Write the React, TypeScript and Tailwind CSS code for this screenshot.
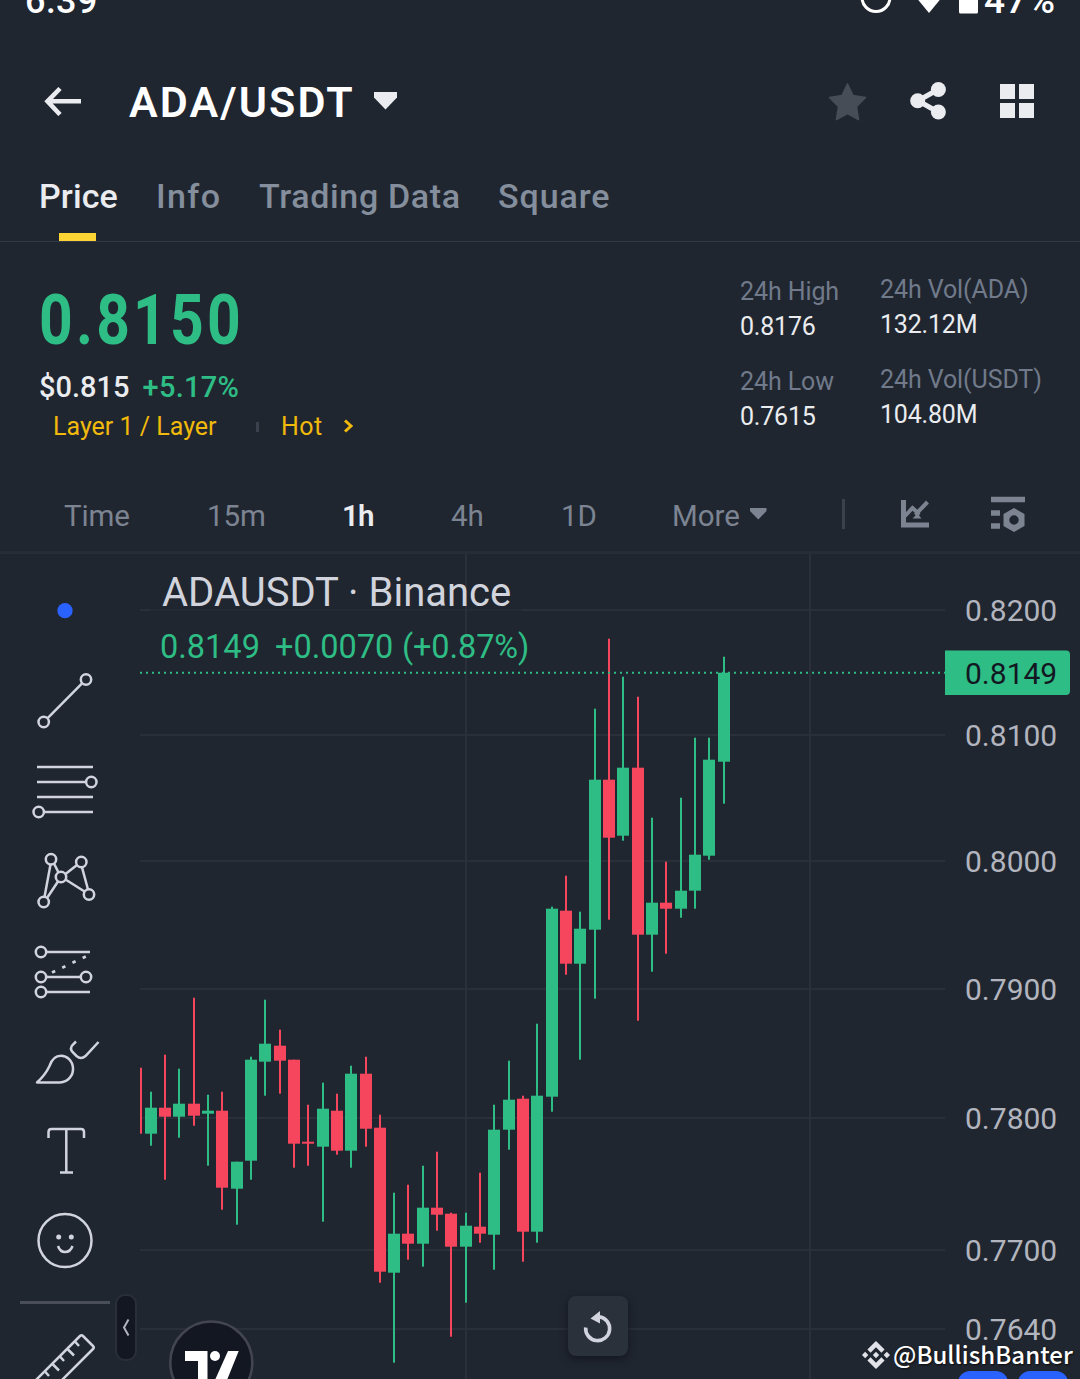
import { useState } from "react";
import type { ReactNode } from "react";
import { SiBinance } from "react-icons/si";

const UP = "#2ebd85";
const DOWN = "#f6465d";

// [x, high, low, body top, body bottom, direction]
type Candle = [number, number, number, number, number, "u" | "d"];

const candles: Candle[] = [
  [151, 1092, 1146, 1108, 1134, "u"],
  [165, 1055, 1180, 1108, 1117, "d"],
  [179, 1069, 1138, 1104, 1117, "u"],
  [194, 998, 1126, 1104, 1116, "d"],
  [208, 1095, 1166, 1111, 1114, "u"],
  [222, 1092, 1210, 1111, 1188, "d"],
  [237, 1162, 1225, 1162, 1189, "u"],
  [251, 1057, 1180, 1060, 1161, "u"],
  [265, 1000, 1096, 1044, 1062, "u"],
  [280, 1030, 1094, 1046, 1061, "d"],
  [294, 1060, 1168, 1060, 1144, "d"],
  [308, 1105, 1166, 1142, 1144, "d"],
  [323, 1083, 1222, 1109, 1147, "u"],
  [337, 1094, 1155, 1111, 1151, "d"],
  [351, 1066, 1168, 1074, 1151, "u"],
  [366, 1057, 1147, 1074, 1129, "d"],
  [380, 1115, 1283, 1128, 1272, "d"],
  [394, 1193, 1363, 1234, 1273, "u"],
  [408, 1185, 1260, 1234, 1244, "d"],
  [423, 1166, 1267, 1208, 1244, "u"],
  [437, 1152, 1231, 1208, 1215, "d"],
  [451, 1213, 1337, 1214, 1247, "d"],
  [466, 1213, 1303, 1226, 1247, "u"],
  [480, 1173, 1243, 1227, 1234, "d"],
  [494, 1105, 1270, 1130, 1235, "u"],
  [509, 1061, 1150, 1100, 1130, "u"],
  [523, 1096, 1262, 1099, 1232, "d"],
  [537, 1024, 1243, 1096, 1232, "u"],
  [552, 907, 1112, 909, 1097, "u"],
  [566, 876, 975, 911, 964, "d"],
  [580, 912, 1060, 929, 964, "u"],
  [595, 709, 999, 780, 930, "u"],
  [609, 639, 920, 780, 838, "d"],
  [623, 677, 841, 768, 836, "u"],
  [638, 697, 1021, 768, 935, "d"],
  [652, 818, 972, 903, 935, "u"],
  [666, 862, 954, 903, 909, "d"],
  [681, 798, 918, 891, 909, "u"],
  [695, 738, 909, 855, 891, "u"],
  [709, 738, 860, 760, 856, "u"],
  [724, 657, 804, 673, 762, "u"],
];

const priceLevels = [
  { label: "0.8200", y: 610 },
  { label: "0.8100", y: 735 },
  { label: "0.8000", y: 861 },
  { label: "0.7900", y: 989 },
  { label: "0.7800", y: 1118 },
  { label: "0.7700", y: 1250 },
  { label: "0.7640", y: 1329 },
];

const tabs = [
  { name: "Price", width: "w-[79px]", text: "tracking-[0.1px]" },
  { name: "Info", width: "w-[65px]", text: "tracking-[1.4px]" },
  { name: "Trading Data", width: "w-[201px]", text: "tracking-[0.65px]" },
  { name: "Square", width: "w-[112px]", text: "tracking-[0.9px]" },
];

const intervals = [
  { name: "Time", width: "w-[143px]" },
  { name: "15m", width: "w-[135px]" },
  { name: "1h", width: "w-[109px]" },
  { name: "4h", width: "w-[110px]" },
  { name: "1D", width: "w-[111px]" },
];

function StatusBar() {
  return (
    <div className="-mt-[19px] flex h-10 items-center pl-[25px] text-white">
      <span className="w-[835px] text-[36px] font-medium leading-10 tracking-[0.5px]">6:39</span>
      <svg width="120" height="40" viewBox="860 -19 120 40" className="block">
        <circle cx="876" cy="-2.5" r="14" fill="none" stroke="#fff" strokeWidth="3" />
        <path d="M915 -4 L929 13 L943 -4 Z" fill="#fff" />
        <rect x="959" y="-16" width="19" height="29.5" rx="1.5" fill="#fff" />
      </svg>
      <span className="ml-1 text-[37px] font-medium leading-10 tracking-[0.8px]">47%</span>
    </div>
  );
}

function Header() {
  return (
    <header className="mt-5 flex h-[120px] items-center pl-[44px] pr-[46px]">
      <svg width="38" height="30" viewBox="44 86 38 30">
        <path d="M81 101.3H48M60 88.5L47.5 101.3L60 114.5" fill="none" stroke="#eaecef" strokeWidth="4.6" />
      </svg>
      <h1 className="ml-[47px] w-[230px] whitespace-nowrap pt-[2px] text-[43px] font-semibold leading-[50px] tracking-[2.1px] text-white">
        ADA/USDT
      </h1>
      <svg width="24" height="18" viewBox="374 92 24 18" className="ml-[15px]">
        <path d="M374 92H397V97.5L385.5 109.5L374 97.5Z" fill="#eaecef" />
      </svg>
      <div className="ml-auto flex items-center">
        <svg width="40" height="40" viewBox="828 81 40 40">
          <path
            d="M847.5 84L853 95.5L865.5 97.5L856.5 106.5L858.5 119.5L847.5 113.5L836.5 119.5L838.5 106.5L829.5 97.5L842 95.5Z"
            fill="#474d57"
            stroke="#474d57"
            strokeWidth="1.6"
            strokeLinejoin="round"
          />
        </svg>
        <svg width="38" height="40" viewBox="909 81 38 40" className="ml-[41px]">
          <path d="M938 89.5L918 100.7L938 112" fill="none" stroke="#eaecef" strokeWidth="5" />
          <circle cx="917.7" cy="100.7" r="7.5" fill="#eaecef" />
          <circle cx="938.4" cy="89.5" r="7.5" fill="#eaecef" />
          <circle cx="938.4" cy="112" r="7.5" fill="#eaecef" />
        </svg>
        <div className="ml-[53px] grid grid-cols-2 gap-1">
          <span className="size-[15px] bg-[#eaecef]" />
          <span className="size-[15px] bg-[#eaecef]" />
          <span className="size-[15px] bg-[#eaecef]" />
          <span className="size-[15px] bg-[#eaecef]" />
        </div>
      </div>
    </header>
  );
}

function Tabs() {
  const [active, setActive] = useState("Price");

  return (
    <nav className="flex h-[81px] gap-[38px] border-b border-[#333a45] pl-[39px]">
      {tabs.map((tab) => (
        <button
          key={tab.name}
          onClick={() => setActive(tab.name)}
          className={`relative h-[80px] whitespace-nowrap pb-[10px] text-left text-[34px] font-medium ${tab.width} ${tab.text} ${
            active === tab.name ? "text-[#eaecef]" : "text-[#848e9c]"
          }`}
        >
          {tab.name}
          {active === tab.name && (
            <span className="absolute bottom-0 left-5 h-2 w-[37px] bg-[#fcd535]" />
          )}
        </button>
      ))}
    </nav>
  );
}

function Stat({ label, value }: { label: string; value: string }) {
  return (
    <div className="whitespace-nowrap text-[25px] leading-[35px]">
      <p className="tracking-[-0.1px] text-[#707a8a]">{label}</p>
      <p className="tracking-[-0.2px] text-[#eaecef]">{value}</p>
    </div>
  );
}

function PriceSummary() {
  return (
    <section className="flex h-[238px]">
      <div className="w-[701px] pl-[39px] pt-[42px]">
        <p className="origin-left scale-x-[0.84] text-[70px] font-bold leading-[72px] tracking-[3.8px] text-[#2ebd85]">
          0.8150
        </p>
        <div className="mt-[13px] flex gap-[13px] text-[29px] font-medium leading-[36px]">
          <span className="text-[#eaecef]">$0.815</span>
          <span className="tracking-[0.3px] text-[#2ebd85]">+5.17%</span>
        </div>
        <div className="mt-1 flex items-center pl-[14px] text-[25px] leading-[36px] text-[#f0b90b]">
          <span className="w-[203px]">Layer 1 / Layer</span>
          <span className="h-[10px] w-[3px] bg-[#3b414c]" />
          <span className="ml-[22px] w-[62px] tracking-[0.4px]">Hot</span>
          <svg width="12" height="16" viewBox="343 419 12 16">
            <path d="M345 420.5L351 426L345 431.5" fill="none" stroke="#f0b90b" strokeWidth="3" />
          </svg>
        </div>
      </div>
      <div className="flex pl-[39px]">
        <div className="flex w-[140px] flex-col gap-5 pt-[32px]">
          <Stat label="24h High" value="0.8176" />
          <Stat label="24h Low" value="0.7615" />
        </div>
        <div className="flex flex-col gap-5 pt-[30px]">
          <Stat label="24h Vol(ADA)" value="132.12M" />
          <Stat label="24h Vol(USDT)" value="104.80M" />
        </div>
      </div>
    </section>
  );
}

function IntervalBar() {
  const [active, setActive] = useState("1h");

  return (
    <div className="flex h-[74px] items-center border-b-[3px] border-[#272d37] pl-[64px] text-[29.5px] text-[#7c8492]">
      {intervals.map((item) => (
        <button
          key={item.name}
          onClick={() => setActive(item.name)}
          className={`pt-[2px] text-left ${item.width} ${
            active === item.name ? "font-semibold tracking-[-0.8px] text-[#eaecef]" : "tracking-[-0.1px]"
          }`}
        >
          {item.name}
        </button>
      ))}
      <button className="flex w-[170px] items-center justify-between pr-[75px] pt-[2px]">
        More
        <svg width="17" height="12" viewBox="751 507 17 12" className="-mt-1.5 shrink-0">
          <path d="M751 507H767.5V510L759.3 518.5L751 510Z" fill="#7c8492" />
        </svg>
      </button>
      <span className="-mt-1 h-[30px] w-[3px] bg-[#3b414c]" />
      <svg width="30" height="30" viewBox="900 499 30 30" className="-mt-1 ml-[55px]">
        <path d="M903.5 500V525H929" fill="none" stroke="#7c8492" strokeWidth="5" />
        <path d="M905 516L912.5 508L917.5 512.5L927.5 502" fill="none" stroke="#7c8492" strokeWidth="4" />
        <path d="M912.5 518.5H921.5L919 515.5L920.5 513H914L915.5 515.5Z" fill="#7c8492" />
      </svg>
      <svg width="38" height="40" viewBox="990 496 38 40" className="ml-[60px]">
        <path d="M991 499.5H1025M991 513H1000M991 526H1000" stroke="#7c8492" strokeWidth="5.4" />
        <path
          fillRule="evenodd"
          d="M1014 508L1024.5 514V526L1014 532L1003.5 526V514ZM1014 515.3A4.7 4.7 0 1 0 1014 524.7A4.7 4.7 0 1 0 1014 515.3Z"
          fill="#7c8492"
        />
      </svg>
    </div>
  );
}

const tools: { name: string; art: ReactNode }[] = [
  { name: "cursor", art: <circle cx="65" cy="610.7" r="7.6" fill="#2962ff" stroke="none" /> },
  {
    name: "trend line",
    art: (
      <>
        <circle cx="86" cy="679.5" r="5.2" />
        <circle cx="43.7" cy="722" r="5.2" />
        <path d="M82.3 683.2L47.4 718.3" />
      </>
    ),
  },
  {
    name: "fib retracement",
    art: (
      <>
        <path d="M37 767H93M37 782H86M37 797H93M44 812H93" />
        <circle cx="91.3" cy="782" r="5.2" />
        <circle cx="38.7" cy="812" r="5.2" />
      </>
    ),
  },
  {
    name: "pattern",
    art: (
      <>
        <path d="M50.5 864.5L44.5 897M54 863.5L58.5 872.5M58 881.5L47 898M65.5 874L77 865M65.5 879.5L84.5 891.5M82 867.3L88 889.5" />
        <circle cx="51" cy="859.3" r="5.2" />
        <circle cx="81.3" cy="862" r="5.2" />
        <circle cx="61" cy="877" r="5.2" />
        <circle cx="43.7" cy="902" r="5.2" />
        <circle cx="89" cy="894.5" r="5.2" />
      </>
    ),
  },
  {
    name: "forecast",
    art: (
      <>
        <path d="M46.5 952H90M46.5 977H81M46.5 992H90" />
        <path d="M52 972.5L88 955.5" strokeDasharray="3.5 7.8" strokeWidth="2.8" />
        <circle cx="41" cy="952" r="5.2" />
        <circle cx="41" cy="977" r="5.2" />
        <circle cx="86" cy="977" r="5.2" />
        <circle cx="41" cy="992" r="5.2" />
      </>
    ),
  },
  {
    name: "brush",
    art: (
      <>
        <path
          d="M37 1082.5H60C68 1082 73.5 1075.5 73 1068C72.5 1060.5 67 1055.7 61 1055.7C54.5 1055.7 51.5 1060 49.5 1066C46.5 1072.5 42 1078 37 1082.5Z"
          strokeLinejoin="round"
        />
        <path d="M76 1041.5L72.5 1045Q69.5 1048.5 72.5 1052L76.5 1056Q81 1060 85.5 1056L98.5 1042" />
      </>
    ),
  },
  {
    name: "text",
    art: <path d="M48.5 1138V1132Q48.5 1129 51.5 1129H81Q84 1129 84 1132V1138M66.3 1129V1172.5M60 1172.5H73" />,
  },
  {
    name: "emoji",
    art: (
      <>
        <circle cx="65" cy="1240.6" r="26.5" />
        <circle cx="58.7" cy="1237" r="2.5" fill="#d1d4dc" stroke="none" />
        <circle cx="71.3" cy="1237" r="2.5" fill="#d1d4dc" stroke="none" />
        <path d="M58 1246Q60 1252 65 1252Q70.5 1252 72.5 1246" />
      </>
    ),
  },
];

function DrawingToolbar() {
  return (
    <aside className="relative w-[140px] shrink-0 pl-5 pt-3">
      {tools.map((tool, i) => (
        <button key={tool.name} aria-label={tool.name} className="block h-[90px] w-[90px]">
          <svg
            width="90"
            height="90"
            viewBox={`20 ${566 + i * 90} 90 90`}
            fill="none"
            stroke="#d1d4dc"
            strokeWidth="2.5"
          >
            {tool.art}
          </svg>
        </button>
      ))}
      <div className="mt-[15px] h-[3px] w-[90px] bg-[#4a4e59]" />
      <svg width="90" height="75" viewBox="20 1304 90 75" fill="none" stroke="#d1d4dc" strokeWidth="2.5">
        <path d="M34 1382L80 1336Q81.5 1334.5 83 1336L93 1346Q94.5 1347.5 93 1349L59 1383" />
        <path d="M75 1341.5L79 1346M67.5 1349L74 1355.5M60 1356.5L64 1361M52.5 1364L59 1370.5M45 1371.5L49 1376" />
      </svg>
      <button
        aria-label="collapse"
        className="absolute left-[115px] top-[740px] flex h-[67px] w-[22px] items-center justify-center rounded-[10px] border-2 border-[#2a2e39] bg-[#131722]"
      >
        <svg width="8" height="20" viewBox="0 0 8 20">
          <path d="M6.5 1.5L2 9.5L6.5 17.5" fill="none" stroke="#b2b5be" strokeWidth="2" />
        </svg>
      </button>
    </aside>
  );
}

function Chart() {
  return (
    <div className="relative">
      <svg width="940" height="825" viewBox="140 554 940 825" className="block">
        {/* Grid */}
        <g stroke="#2a2f3a" strokeWidth="2">
          {priceLevels.map((level, i) => (
            <path key={level.label} d={i === 0 ? `M140 ${level.y}H150M522 ${level.y}H945` : `M140 ${level.y}H945`} />
          ))}
          <path d="M150 610H522" opacity="0.5" />
          <path d="M466 554V1379M810 554V1379" />
        </g>

        {/* Candles */}
        <g transform="translate(0 -0.3)">
          <rect x="140" y="1068" width="2" height="66" fill={DOWN} />
          {candles.map(([x, high, low, top, bottom, dir]) => (
            <g key={x} fill={dir === "u" ? UP : DOWN}>
              <rect x={x - 1} y={high} width="2" height={low - high} />
              <rect x={x - 6} y={top} width="12" height={bottom - top} />
            </g>
          ))}
        </g>

        {/* Last price */}
        <path d="M140 672.7H945" stroke={UP} strokeWidth="2" strokeDasharray="2 4" />
        <path d="M945 650.5H1066Q1070 650.5 1070 654.5V691Q1070 695 1066 695H945Z" fill={UP} />
        <g fontSize="30" fill="#b2b5be">
          {priceLevels.map((level) => (
            <text key={level.label} x="965" y={level.y + 11}>
              {level.label}
            </text>
          ))}
          <text x="965" y="684" fill="#131722">
            0.8149
          </text>
        </g>

        <rect x="958" y="1371" width="50" height="30" rx="12" fill="#2962ff" />
        <rect x="1018" y="1371" width="50" height="30" rx="12" fill="#2962ff" />

        {/* TradingView badge */}
        <circle cx="211.3" cy="1362.5" r="41" fill="#131722" stroke="#434651" strokeWidth="2.5" />
        <g fill="#fff">
          <path d="M185 1351H207.5V1380H198V1361H185Z" />
          <circle cx="215" cy="1356" r="5" />
          <path d="M228 1351H238.7L227 1380H215Z" />
        </g>
      </svg>

      {/* Legend */}
      <div className="absolute left-[22px] top-[15px] whitespace-nowrap">
        <p className="text-[40px] leading-[48px] text-[#d1d4dc]">ADAUSDT · Binance</p>
        <p className="-ml-[2px] flex text-[32.5px] leading-[60px] text-[#2ebd85]">
          <span className="w-[115px]">0.8149</span>
          <span className="w-[127px]">+0.0070</span>
          <span className="tracking-[-0.1px]">(+0.87%)</span>
        </p>
      </div>

      <button
        aria-label="reset"
        className="absolute left-[428px] top-[742px] size-[60px] rounded-lg bg-[#2a313b] shadow-[0_3px_8px_rgba(10,12,20,0.6)]"
      >
        <svg width="60" height="60" viewBox="568 1296 60 60">
          <path d="M585.7 1327.5A12 12 0 1 0 599 1316.7" fill="none" stroke="#d1d4dc" strokeWidth="3.6" />
          <path d="M590.5 1318.5L600 1311V1323.5Z" fill="#d1d4dc" />
        </svg>
      </button>

      <div className="absolute left-[722px] top-[784px] flex items-center gap-[3px] whitespace-nowrap text-white [text-shadow:1px_1px_2px_rgba(0,0,0,0.7)]">
        <SiBinance className="mt-[2px] size-[28px] text-[#e1e3e8]" />
        <span className="font-['Noto_Sans_CJK_SC',sans-serif] text-[24px] font-medium leading-8 tracking-[0.05px]">
          @BullishBanter
        </span>
      </div>
    </div>
  );
}

export default function App() {
  return (
    <main className="h-[1379px] w-[1080px] overflow-hidden bg-[#202630] font-['Roboto',sans-serif]">
      <StatusBar />
      <Header />
      <Tabs />
      <PriceSummary />
      <IntervalBar />
      <div className="flex h-[825px] overflow-hidden">
        <DrawingToolbar />
        <Chart />
      </div>
    </main>
  );
}
